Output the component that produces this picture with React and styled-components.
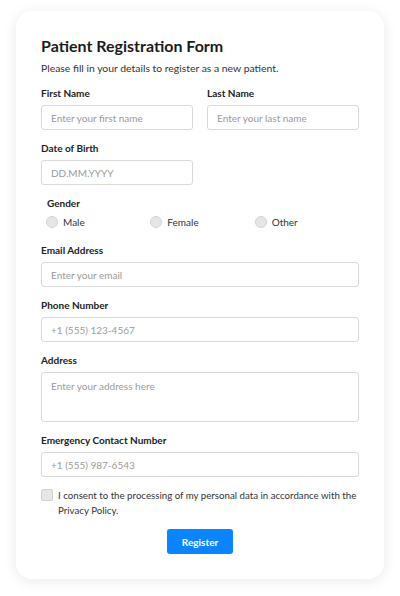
import React from 'react'
import styled, { createGlobalStyle } from 'styled-components'

const Global = createGlobalStyle`
    html, body {
        margin: 0;
        padding: 0;
        background: #ffffff;
        font-family: Lato, "Noto Sans", sans-serif;
        color: #222;
    }
    * { box-sizing: border-box; }
`

const Page = styled.div`
    padding: 11px 16px 16px;
`

const Card = styled.form`
    background: #fff;
    border-radius: 16px;
    padding: 25px 25px 25px;
    box-shadow: 0 2px 14px rgba(0,0,0,0.09);
`

const Title = styled.h2`
    margin: 0 0 5px;
    font-size: 16px;
    line-height: 20px;
    font-weight: 700;
    color: #1b1b1b;
`

const Subtitle = styled.p`
    margin: 0 0 11px;
    font-size: 10.4px;
    line-height: 14px;
    color: #333;
`

const Row = styled.div`
    display: grid;
    grid-template-columns: 1fr 1fr;
    gap: 14px;
`

const Field = styled.div`
    margin-bottom: 11px;
    width: ${p => p.$half ? 'calc(50% - 7px)' : 'auto'};
`

const Label = styled.label`
    display: block;
    font-size: 10px;
    line-height: 14px;
    font-weight: 700;
    color: #222;
    margin-bottom: 5px;
`

const Input = styled.input`
    display: block;
    width: 100%;
    height: 25px;
    border: 1px solid #d9d9d9;
    border-radius: 3px;
    padding: 0 9px;
    font-family: inherit;
    font-size: 10px;
    color: #333;
    outline: none;
    &::placeholder { color: #9a9a9a; }
`

const TextArea = styled.textarea`
    display: block;
    width: 100%;
    height: 50px;
    border: 1px solid #d9d9d9;
    border-radius: 3px;
    padding: 6px 9px;
    font-family: inherit;
    font-size: 10px;
    line-height: 14px;
    resize: none;
    outline: none;
    &::placeholder { color: #9a9a9a; }
`

const Group = styled.fieldset`
    border: 0;
    margin: 0 0 14px;
    padding: 0 0 0 5px;
`

const Legend = styled.div`
    font-size: 10px;
    line-height: 14px;
    font-weight: 700;
    padding-left: 1px;
    margin-bottom: 5px;
`

const Options = styled.div`
    display: grid;
    grid-template-columns: repeat(3, 1fr);
`

const Option = styled.label`
    display: flex;
    align-items: center;
    gap: 5px;
    font-size: 10px;
    line-height: 14px;
    color: #333;
`

const Radio = styled.input.attrs({ type: 'radio' })`
    appearance: none;
    margin: 0;
    width: 12px;
    height: 12px;
    border-radius: 50%;
    background: #e6e6e6;
    border: 1px solid #d2d2d2;
`

const Consent = styled.label`
    display: flex;
    align-items: flex-start;
    gap: 5px;
    font-size: 9.7px;
    line-height: 15px;
    color: #333;
    margin: 1px 0 11px;
`

const Box = styled.input.attrs({ type: 'checkbox' })`
    appearance: none;
    flex: none;
    margin: 1px 0 0;
    width: 12px;
    height: 12px;
    border-radius: 2px;
    background: #e6e6e6;
    border: 1px solid #d2d2d2;
`

const Actions = styled.div`
    display: flex;
    justify-content: center;
`

const Button = styled.button`
    height: 25px;
    padding: 0 15px;
    border: 0;
    border-radius: 3px;
    background: #0a84ff;
    color: #fff;
    font-family: inherit;
    font-size: 10px;
    font-weight: 700;
`

export default function App() {
    return (
        <Page>
            <Global />
            <Card onSubmit={e => e.preventDefault()}>
                <Title>Patient Registration Form</Title>
                <Subtitle>Please fill in your details to register as a new patient.</Subtitle>

                <Row>
                    <Field>
                        <Label>First Name</Label>
                        <Input placeholder="Enter your first name" />
                    </Field>
                    <Field>
                        <Label>Last Name</Label>
                        <Input placeholder="Enter your last name" />
                    </Field>
                </Row>

                <Field $half>
                    <Label>Date of Birth</Label>
                    <Input placeholder="DD.MM.YYYY" />
                </Field>

                <Group>
                    <Legend>Gender</Legend>
                    <Options>
                        {['Male', 'Female', 'Other'].map(g => (
                            <Option key={g}><Radio name="gender" />{g}</Option>
                        ))}
                    </Options>
                </Group>

                <Field>
                    <Label>Email Address</Label>
                    <Input placeholder="Enter your email" />
                </Field>

                <Field>
                    <Label>Phone Number</Label>
                    <Input placeholder="+1 (555) 123-4567" />
                </Field>

                <Field>
                    <Label>Address</Label>
                    <TextArea placeholder="Enter your address here" />
                </Field>

                <Field>
                    <Label>Emergency Contact Number</Label>
                    <Input placeholder="+1 (555) 987-6543" />
                </Field>

                <Consent>
                    <Box />
                    <span>I consent to the processing of my personal data in accordance with the Privacy Policy.</span>
                </Consent>

                <Actions>
                    <Button type="submit">Register</Button>
                </Actions>
            </Card>
        </Page>
    )
}
